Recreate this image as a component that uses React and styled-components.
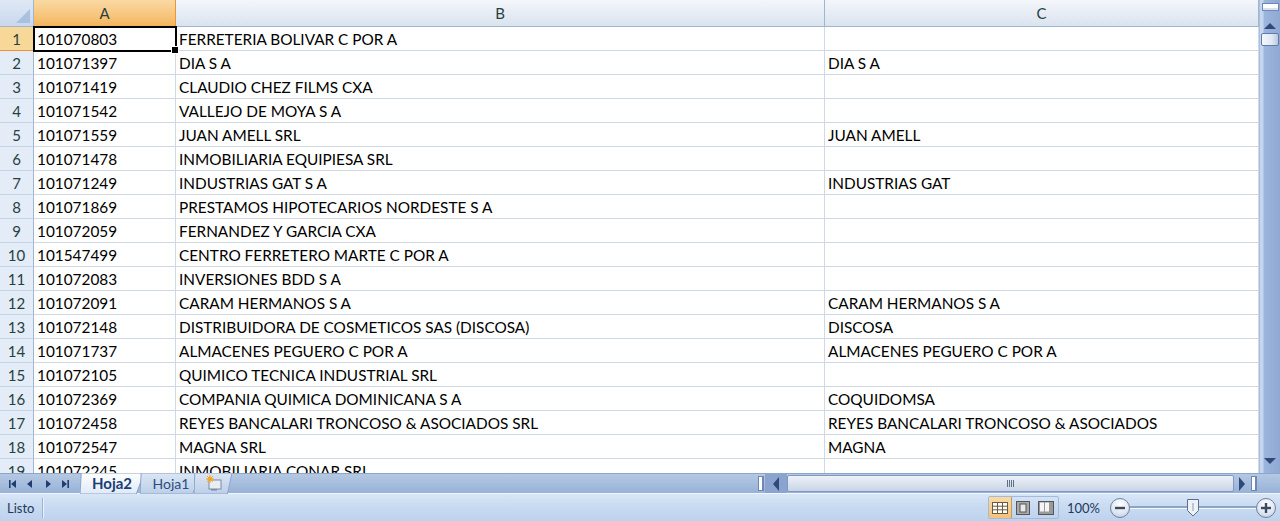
import React from "react";
import styled, { createGlobalStyle } from "styled-components";

const Global = createGlobalStyle`
  html, body { margin: 0; padding: 0; overflow: hidden; }
  body { font-family: Lato, "Open Sans", sans-serif; }
  * { box-sizing: border-box; }
`;

const rows = [
  ["101070803", "FERRETERIA BOLIVAR C POR A", ""],
  ["101071397", "DIA S A", "DIA S A"],
  ["101071419", "CLAUDIO CHEZ FILMS CXA", ""],
  ["101071542", "VALLEJO DE MOYA S A", ""],
  ["101071559", "JUAN AMELL SRL", "JUAN AMELL"],
  ["101071478", "INMOBILIARIA EQUIPIESA SRL", ""],
  ["101071249", "INDUSTRIAS GAT S A", "INDUSTRIAS GAT"],
  ["101071869", "PRESTAMOS HIPOTECARIOS NORDESTE S A", ""],
  ["101072059", "FERNANDEZ Y GARCIA CXA", ""],
  ["101547499", "CENTRO FERRETERO MARTE C POR A", ""],
  ["101072083", "INVERSIONES BDD S A", ""],
  ["101072091", "CARAM HERMANOS S A", "CARAM HERMANOS S A"],
  ["101072148", "DISTRIBUIDORA DE COSMETICOS SAS (DISCOSA)", "DISCOSA"],
  ["101071737", "ALMACENES PEGUERO C POR A", "ALMACENES PEGUERO C POR A"],
  ["101072105", "QUIMICO TECNICA INDUSTRIAL SRL", ""],
  ["101072369", "COMPANIA QUIMICA DOMINICANA S A", "COQUIDOMSA"],
  ["101072458", "REYES BANCALARI TRONCOSO & ASOCIADOS SRL", "REYES BANCALARI TRONCOSO & ASOCIADOS"],
  ["101072547", "MAGNA SRL", "MAGNA"],
  ["101072245", "INMOBILIARIA CONAR SRL", ""],
];

const Window = styled.div`
  width: 1280px;
  height: 521px;
  display: flex;
  flex-direction: column;
  background: #fff;
  overflow: hidden;
`;

const Main = styled.div`
  height: 473px;
  display: flex;
  overflow: hidden;
`;

const Sheet = styled.div`
  flex: 1;
  display: grid;
  grid-template-columns: 34px 142px 649px 434px;
  grid-auto-rows: 24px;
  grid-template-rows: 27px;
  align-content: start;
  overflow: hidden;
`;

const Corner = styled.div`
  background: linear-gradient(#dfe8f5, #c9d8ee);
  border-right: 1px solid #9eb6ce;
  border-bottom: 1px solid #9eb6ce;
  position: relative;
  &::after {
    content: "";
    position: absolute;
    right: 3px;
    bottom: 3px;
    width: 0;
    height: 0;
    border-left: 14px solid transparent;
    border-bottom: 14px solid #a9c0df;
  }
`;

const ColHead = styled.div`
  display: flex;
  align-items: center;
  justify-content: center;
  font-size: 15px;
  color: #27413e;
  border-right: 1px solid #9eb6ce;
  border-bottom: 1px solid #9eb6ce;
  background: ${(p) =>
    p.$active
      ? "linear-gradient(#f9d9a3, #f7c57b 60%, #f1b45d)"
      : "linear-gradient(#f3f6fb, #e5ebf4 60%, #dae3ee)"};
  border-right-color: ${(p) => (p.$active ? "#f29436" : "#9eb6ce")};
  border-bottom-color: ${(p) => (p.$active ? "#f29436" : "#9eb6ce")};
`;

const RowHead = styled.div`
  display: flex;
  align-items: center;
  justify-content: center;
  font-size: 15px;
  color: #27413e;
  background: ${(p) => (p.$active ? "#f8d898" : "#e4ecf7")};
  border-right: 1px solid ${(p) => (p.$active ? "#f29436" : "#9eb6ce")};
  border-bottom: 1px solid ${(p) => (p.$active ? "#f29436" : "#c5d3e6")};
`;

const Cell = styled.div`
  position: relative;
  display: flex;
  align-items: center;
  padding-left: 3px;
  padding-top: 1px;
  font-size: 15.35px;
  color: #000;
  white-space: nowrap;
  overflow: visible;
  border-right: 1px solid #d0d7e5;
  border-bottom: 1px solid #d0d7e5;
  ${(p) =>
    p.$selected &&
    `
    &::after {
      content: "";
      position: absolute;
      left: -1px;
      top: -1px;
      right: -2px;
      bottom: -2px;
      border: 2px solid #000;
      pointer-events: none;
    }
    &::before {
      content: "";
      position: absolute;
      right: -4px;
      bottom: -4px;
      width: 6px;
      height: 6px;
      background: #000;
      border: 1px solid #fff;
      z-index: 2;
    }
  `}
`;

const VScroll = styled.div`
  width: 21px;
  display: flex;
  flex-direction: column;
  align-items: center;
  background: linear-gradient(90deg, #c6d6ee 0, #c6d6ee 3px, #9db5dc 4px, #8fa9d4 100%);
  border-left: 1px solid #a9bfdf;
`;

const SplitBoxV = styled.div`
  width: 17px;
  height: 8px;
  margin-top: 3px;
  background: #fff;
  border: 1px solid #6d87b6;
  box-shadow: inset 0 -2px 0 #d7e1f0;
`;

const Arrow = styled.div`
  width: 0;
  height: 0;
  ${(p) =>
    p.$dir === "up"
      ? "border-left: 6px solid transparent; border-right: 6px solid transparent; border-bottom: 6px solid #2f4a78;"
      : p.$dir === "down"
      ? "border-left: 6px solid transparent; border-right: 6px solid transparent; border-top: 6px solid #2f4a78;"
      : p.$dir === "left"
      ? "border-top: 7px solid transparent; border-bottom: 7px solid transparent; border-right: 6px solid #2f4a78;"
      : "border-top: 7px solid transparent; border-bottom: 7px solid transparent; border-left: 6px solid #2f4a78;"}
`;

const VUp = styled.div`
  margin-top: 9px;
  height: 12px;
  display: flex;
  align-items: center;
`;

const VThumb = styled.div`
  width: 18px;
  height: 13px;
  margin-top: 1px;
  border: 1px solid #5e7cab;
  border-radius: 2px;
  background: linear-gradient(90deg, #f4f7fc, #e2e9f4 60%, #b9c8df);
`;

const VSpacer = styled.div`
  flex: 1;
`;

const VDown = styled.div`
  height: 16px;
  margin-bottom: 4px;
  display: flex;
  align-items: center;
`;

const TabBar = styled.div`
  height: 20px;
  display: flex;
  align-items: stretch;
  background: linear-gradient(#b4c8e2, #a3bbdc 60%, #98b2d6);
  border-top: 1px solid #8ba6cf;
`;

const TabNav = styled.div`
  width: 78px;
  display: flex;
  align-items: center;
  justify-content: space-around;
  padding: 0 4px;
`;

const NavIcon = styled.svg`
  width: 10px;
  height: 10px;
  display: block;
`;

const Tabs = styled.div`
  display: flex;
  align-items: stretch;
`;

const Tab = styled.div`
  position: relative;
  width: ${(p) => p.$w}px;
  margin-left: ${(p) => p.$ml || 0}px;
  display: flex;
  align-items: center;
  justify-content: center;
  font-size: ${(p) => (p.$active ? 15 : 14)}px;
  font-weight: ${(p) => (p.$active ? 700 : 400)};
  color: ${(p) => (p.$active ? "#1b3e74" : "#2a4d80")};
  padding-left: ${(p) => p.$pl || 0}px;
`;

const TabShape = styled.svg`
  position: absolute;
  left: 0;
  top: -1px;
  width: 100%;
  height: 21px;
  z-index: 0;
`;

const TabLabel = styled.span`
  position: relative;
  z-index: 1;
  line-height: 1;
`;

const Filler = styled.div`
  flex: 1;
`;

const SplitBoxH = styled.div`
  width: 6px;
  margin: 2px 1px;
  background: #fff;
  border: 1px solid #6d87b6;
  border-right-width: 2px;
`;

const HArrowBtn = styled.div`
  width: ${(p) => p.$w}px;
  display: flex;
  align-items: center;
  justify-content: center;
  background: ${(p) => (p.$dark ? "#8aa4cf" : "transparent")};
`;

const HTrack = styled.div`
  width: 447px;
  margin: 1px 0;
  border: 1px solid #7e98c2;
  border-radius: 2px;
  background: linear-gradient(#eef2f8, #dbe3ef 50%, #c9d4e5);
  display: flex;
  align-items: center;
  justify-content: center;
`;

const Grip = styled.div`
  display: flex;
  gap: 1px;
  & > span {
    width: 1px;
    height: 7px;
    background: #5f6f88;
  }
`;

const HRight = styled.div`
  width: 22px;
`;

const Status = styled.div`
  flex: 1;
  display: flex;
  align-items: center;
  background: linear-gradient(#d8e6f7, #c9dbf2 45%, #bcd2ee);
  border-top: 1px solid #f2f7fd;
  font-size: 13px;
  color: #1e395b;
`;

const StatusText = styled.div`
  padding: 0 8px 0 7px;
  display: flex;
  align-items: center;
  border-right: 1px solid #9ab2d3;
  box-shadow: 1px 0 0 #eaf1fa;
  height: 20px;
`;

const ViewGroup = styled.div`
  margin-left: auto;
  display: flex;
  height: 23px;
  border: 1px solid #a3bad8;
  border-radius: 2px;
  margin-right: 8px;
`;

const ViewBtn = styled.div`
  width: 23px;
  height: 21px;
  display: flex;
  align-items: center;
  justify-content: center;
  background: ${(p) => (p.$active ? "linear-gradient(#f9dba8, #f3c27a)" : "transparent")};
  border-right: 1px solid ${(p) => (p.$active ? "#c29a5a" : "transparent")};
`;

const Zoom = styled.div`
  font-size: 13px;
  color: #1e395b;
  margin-right: 10px;
`;

const RoundBtn = styled.div`
  width: 20px;
  height: 20px;
  border-radius: 50%;
  border: 1px solid #6d82a1;
  background: radial-gradient(circle at 50% 30%, #fff, #dde5f0 60%, #b3c1d6);
  display: flex;
  align-items: center;
  justify-content: center;
`;

const Slider = styled.div`
  position: relative;
  width: 126px;
  height: 20px;
  display: flex;
  align-items: center;
  &::before {
    content: "";
    width: 100%;
    height: 2px;
    background: #8da4c4;
    border-bottom: 1px solid #f2f6fb;
  }
`;

const SliderThumb = styled.svg`
  position: absolute;
  left: 57px;
  top: 1px;
`;

const PlusWrap = styled.div`
  margin-right: 4px;
`;

function NavGlyph({ type }) {
  const c = "#203d6e";
  if (type === "first")
    return (
      <NavIcon viewBox="0 0 10 10">
        <rect x="1" y="1" width="1.6" height="8" fill={c} />
        <polygon points="8,1 8,9 3,5" fill={c} />
      </NavIcon>
    );
  if (type === "prev")
    return (
      <NavIcon viewBox="0 0 10 10">
        <polygon points="7,1 7,9 2,5" fill={c} />
      </NavIcon>
    );
  if (type === "next")
    return (
      <NavIcon viewBox="0 0 10 10">
        <polygon points="3,1 3,9 8,5" fill={c} />
      </NavIcon>
    );
  return (
    <NavIcon viewBox="0 0 10 10">
      <polygon points="2,1 2,9 7,5" fill={c} />
      <rect x="7.4" y="1" width="1.6" height="8" fill={c} />
    </NavIcon>
  );
}

function TabBg({ active }) {
  return (
    <TabShape viewBox="0 0 100 21" preserveAspectRatio="none">
      <defs>
        <linearGradient id={active ? "ta" : "ti"} x1="0" y1="0" x2="0" y2="1">
          <stop offset="0" stopColor={active ? "#ffffff" : "#dbe6f4"} />
          <stop offset="1" stopColor={active ? "#dfe9f6" : "#bccfe8"} />
        </linearGradient>
      </defs>
      <polygon
        points="2,0 100,0 88,21 0,21"
        fill={`url(#${active ? "ta" : "ti"})`}
        stroke="#8aa5cc"
        strokeWidth="1"
        vectorEffect="non-scaling-stroke"
      />
    </TabShape>
  );
}

export default function App() {
  return (
    <Window>
      <Global />
      <Main>
        <Sheet>
          <Corner />
          <ColHead $active>A</ColHead>
          <ColHead>B</ColHead>
          <ColHead>C</ColHead>
          {rows.map((r, i) => (
            <React.Fragment key={i}>
              <RowHead $active={i === 0}>{i + 1}</RowHead>
              <Cell $selected={i === 0}>{r[0]}</Cell>
              <Cell>{r[1]}</Cell>
              <Cell>{r[2]}</Cell>
            </React.Fragment>
          ))}
        </Sheet>
        <VScroll>
          <SplitBoxV />
          <VUp>
            <Arrow $dir="up" />
          </VUp>
          <VThumb />
          <VSpacer />
          <VDown>
            <Arrow $dir="down" />
          </VDown>
        </VScroll>
      </Main>
      <TabBar>
        <TabNav>
          <NavGlyph type="first" />
          <NavGlyph type="prev" />
          <NavGlyph type="next" />
          <NavGlyph type="last" />
        </TabNav>
        <Tabs>
          <Tab $active $w={64} $ml={2}>
            <TabBg active />
            <TabLabel>Hoja2</TabLabel>
          </Tab>
          <Tab $w={60} $ml={-4} $pl={2}>
            <TabBg />
            <TabLabel>Hoja1</TabLabel>
          </Tab>
          <Tab $w={38} $ml={-6} $pl={2}>
            <TabBg />
            <TabLabel>
              <svg width="18" height="16" viewBox="0 0 18 16">
                <rect x="4" y="5" width="12" height="9" fill="#e9eef5" stroke="#7a8aa3" />
                <rect x="6" y="14" width="6" height="1.5" fill="#7a8aa3" />
                <circle cx="5" cy="4" r="2.6" fill="#f7b23a" />
                <path d="M5 0v8M1 4h8M2 1l6 6M8 1l-6 6" stroke="#f4a21c" strokeWidth="0.8" />
              </svg>
            </TabLabel>
          </Tab>
        </Tabs>
        <Filler />
        <SplitBoxH />
        <HArrowBtn $dark $w={22}>
          <Arrow $dir="left" />
        </HArrowBtn>
        <HTrack>
          <Grip>
            <span />
            <span />
            <span />
            <span />
          </Grip>
        </HTrack>
        <HArrowBtn $w={16}>
          <Arrow $dir="right" />
        </HArrowBtn>
        <SplitBoxH />
        <HRight />
      </TabBar>
      <Status>
        <StatusText>Listo</StatusText>
        <ViewGroup>
          <ViewBtn $active>
            <svg width="16" height="12" viewBox="0 0 16 12">
              <rect x="0.5" y="0.5" width="15" height="11" fill="#fff" stroke="#6c5a3c" />
              <path d="M0.5 4.2h15M0.5 7.8h15M5.5 0.5v11M10.5 0.5v11" stroke="#6c5a3c" />
            </svg>
          </ViewBtn>
          <ViewBtn>
            <svg width="14" height="14" viewBox="0 0 14 14">
              <rect x="0.5" y="0.5" width="13" height="13" fill="#a9a9a9" stroke="#555" />
              <rect x="4" y="3" width="6" height="8" fill="#e9e9e9" stroke="#555" />
            </svg>
          </ViewBtn>
          <ViewBtn>
            <svg width="16" height="14" viewBox="0 0 16 14">
              <rect x="0.5" y="0.5" width="15" height="13" fill="#9a9a9a" stroke="#555" />
              <rect x="2" y="1.5" width="4" height="9" fill="#f4f4f4" />
              <rect x="7" y="1.5" width="4" height="9" fill="#f4f4f4" />
            </svg>
          </ViewBtn>
        </ViewGroup>
        <Zoom>100%</Zoom>
        <RoundBtn>
          <svg width="10" height="10" viewBox="0 0 10 10">
            <rect x="0" y="3.8" width="10" height="2.4" fill="#3b4a60" />
          </svg>
        </RoundBtn>
        <Slider>
          <SliderThumb width="12" height="18" viewBox="0 0 12 18">
            <path d="M0.5 0.5h11v11l-5.5 5.5l-5.5-5.5z" fill="#eef2f7" stroke="#5b6f8c" />
            <path d="M6 4v8" stroke="#8a9ab0" />
          </SliderThumb>
        </Slider>
        <PlusWrap>
          <RoundBtn>
            <svg width="10" height="10" viewBox="0 0 10 10">
              <rect x="0" y="3.8" width="10" height="2.4" fill="#3b4a60" />
              <rect x="3.8" y="0" width="2.4" height="10" fill="#3b4a60" />
            </svg>
          </RoundBtn>
        </PlusWrap>
      </Status>
    </Window>
  );
}
